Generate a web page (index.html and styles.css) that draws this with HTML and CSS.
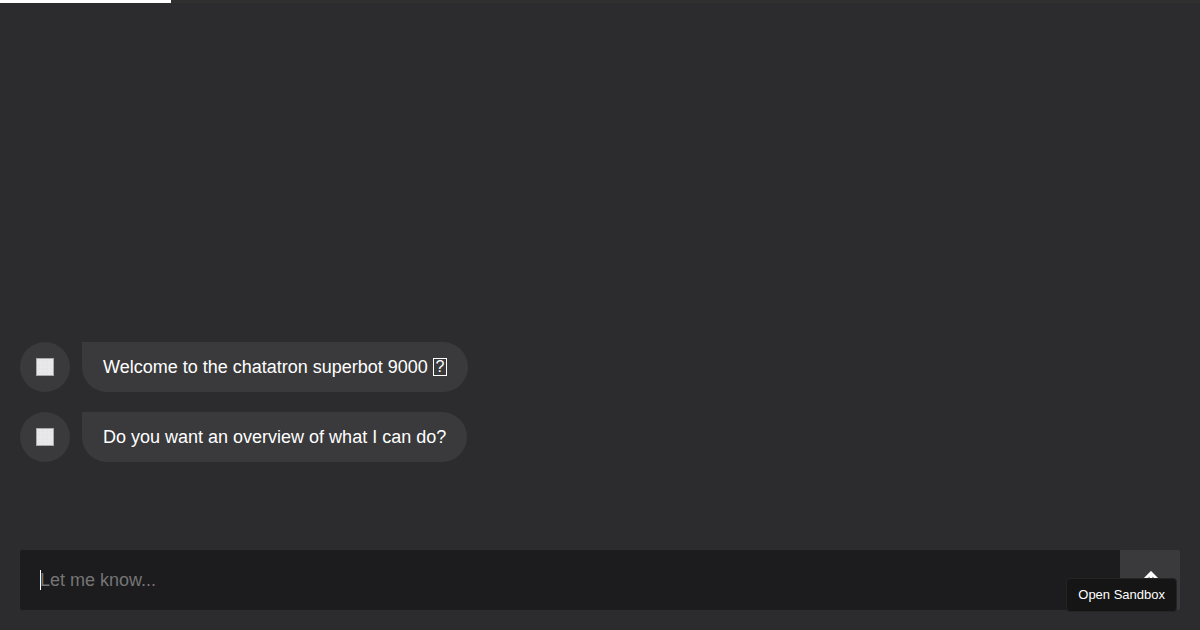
FILE: index.html
```
<!DOCTYPE html>
<html lang="en">
<head>
    <meta charset="UTF-8">
    <meta name="viewport" content="width=device-width, initial-scale=1.0">
    <title>Chatatron</title>
    <link rel="stylesheet" href="styles.css">
</head>
<body>
    <div class="progress"><div class="progress-bar"></div></div>
    <main class="chat">
        <div class="messages">
            <div class="message">
                <div class="avatar"><span class="avatar-icon"></span></div>
                <p class="bubble">Welcome to the chatatron superbot 9000 <span class="glyph">?</span></p>
            </div>
            <div class="message">
                <div class="avatar"><span class="avatar-icon"></span></div>
                <p class="bubble">Do you want an overview of what I can do?</p>
            </div>
        </div>
        <form class="chat-form">
            <div class="field">
                <input type="text" class="chat-input" aria-label="Message" placeholder="Let me know...">
                <span class="caret"></span>
            </div>
            <button type="submit" class="send" aria-label="Send">
                <svg width="18" height="18" viewBox="0 0 18 18" fill="none" stroke="#fff" stroke-width="3">
                    <path d="M3 9l7-7 7 7M10 3v14"/>
                </svg>
            </button>
        </form>
    </main>
    <a href="#" class="sandbox-link">Open Sandbox</a>
</body>
</html>
```
FILE: styles.css
```
* {
    margin: 0;
    padding: 0;
    box-sizing: border-box;
}
body {
    background: #2c2c2e;
    color: #fff;
    font-family: "Helvetica Neue", Helvetica, "Liberation Sans", Arial, sans-serif;
    font-size: 18px;
    line-height: 20px;
}
.progress {
    position: fixed;
    top: 0;
    left: 0;
    right: 0;
    height: 3px;
    background: #303031;
}
.progress-bar {
    width: 171px;
    height: 3px;
    background: #fff;
}
.chat {
    display: flex;
    flex-direction: column;
    justify-content: flex-end;
    gap: 88px;
    min-height: 100vh;
    padding: 20px;
}
.messages {
    display: flex;
    flex-direction: column;
    gap: 20px;
}
.message {
    display: flex;
    gap: 12px;
}
.avatar {
    display: flex;
    align-items: center;
    justify-content: center;
    flex: none;
    width: 50px;
    height: 50px;
    border-radius: 50%;
    background: #3a3a3c;
}
.avatar-icon {
    width: 18px;
    height: 18px;
    border: 1px solid #a9a9ab;
    background: radial-gradient(circle, #dcdcdf 0, #e8e8ea 1px) 0 0 / 4px 4px;
}
.bubble {
    padding: 15px 21px;
    border-radius: 0 25px 25px 25px;
    background: #3a3a3c;
}
.glyph {
    display: inline-block;
    width: 14px;
    height: 18px;
    margin-bottom: 1px;
    border: 1px solid #fff;
    font-size: 16px;
    line-height: 16px;
    text-align: center;
    vertical-align: bottom;
}
.chat-form {
    display: flex;
    height: 60px;
    border-radius: 2px;
    overflow: hidden;
}
.field {
    position: relative;
    flex: 1;
}
.chat-input {
    width: 100%;
    height: 100%;
    padding: 20px;
    border: none;
    outline: none;
    background: #1c1c1e;
    color: #fff;
    font: inherit;
}
.chat-input::placeholder {
    color: #757575;
}
.chat-input:focus + .caret {
    display: none;
}
.caret {
    position: absolute;
    top: 20px;
    left: 20px;
    width: 1px;
    height: 20px;
    background: #fff;
}
.send {
    display: flex;
    align-items: center;
    justify-content: center;
    width: 60px;
    border: none;
    background: #3a3a3c;
    cursor: pointer;
}
.sandbox-link {
    position: fixed;
    right: 23px;
    bottom: 18px;
    padding: 8px 11px;
    border: 1px solid #242424;
    border-radius: 4px;
    background: #151515;
    color: #fff;
    font-size: 13px;
    line-height: 16px;
    text-decoration: none;
}
```
